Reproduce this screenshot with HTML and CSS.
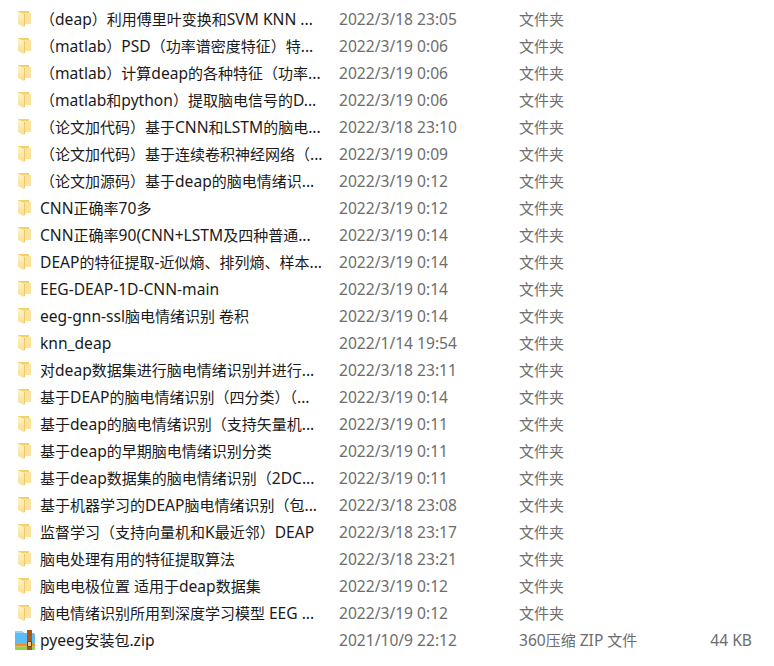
FILE: index.html
```html
<!DOCTYPE html>
<html lang="zh-CN">

<head>
    <meta charset="UTF-8">
    <title>文件列表</title>
    <link rel="stylesheet" href="styles.css">
</head>

<body>
    <svg class="defs" width="0" height="0">
        <defs>
            <linearGradient id="door" x1="0" y1="0" x2="0" y2="1">
                <stop offset="0" stop-color="#fef3cb"/>
                <stop offset="1" stop-color="#f9dd8e"/>
            </linearGradient>
        </defs>
        <symbol id="folder" viewBox="0 0 13 16">
            <path d="M0 0h11v13H0z" fill="#f3d06a"/>
            <path d="M5 2h8v11H6l-1 1z" fill="#fae39a"/>
            <path d="M0 .5l6 2.500V16L0 13z" fill="url(#door)"/>
            <path d="M6 3v13l1-1.500V3z" fill="#eec766"/>
        </symbol>
        <symbol id="zip" viewBox="0 0 20 20">
            <path d="M0 3q0-2 2-2h5l2 2h9q2 0 2 2v10H0z" fill="#5cbcf6"/>
            <path d="M0 1.500q0-.5 2-.5h5l2 2H1z" fill="#8ed4fa"/>
            <path d="M0 14h20v2.500H0z" fill="#f48f1e"/>
            <path d="M0 16.500h20V19q0 1-1 1H1q-1 0-1-1z" fill="#92d050"/>
            <path d="M12 0h5v20h-5z" fill="#a8591a"/>
            <path d="M12.500 11.500h4v5h-4z" fill="#f5c878" stroke="#7c3f10"/>
        </symbol>
    </svg>

    <ul class="file-list">
        <li class="row"><svg class="icon"><use href="#folder"/></svg><span class="name">（<span class="en">deap</span>）利用傅里叶变换和<span class="en">SVM KNN ...</span></span><span class="date">2022/3/18 23:05</span><span class="type">文件夹</span></li>
        <li class="row"><svg class="icon"><use href="#folder"/></svg><span class="name">（<span class="en">matlab</span>）<span class="en">PSD</span>（功率谱密度特征）特<span class="en">...</span></span><span class="date">2022/3/19 0:06</span><span class="type">文件夹</span></li>
        <li class="row"><svg class="icon"><use href="#folder"/></svg><span class="name">（<span class="en">matlab</span>）计算<span class="en">deap</span>的各种特征（功率<span class="en">...</span></span><span class="date">2022/3/19 0:06</span><span class="type">文件夹</span></li>
        <li class="row"><svg class="icon"><use href="#folder"/></svg><span class="name">（<span class="en">matlab</span>和<span class="en">python</span>）提取脑电信号的<span class="en">D...</span></span><span class="date">2022/3/19 0:06</span><span class="type">文件夹</span></li>
        <li class="row"><svg class="icon"><use href="#folder"/></svg><span class="name">（论文加代码）基于<span class="en">CNN</span>和<span class="en">LSTM</span>的脑电<span class="en">...</span></span><span class="date">2022/3/18 23:10</span><span class="type">文件夹</span></li>
        <li class="row"><svg class="icon"><use href="#folder"/></svg><span class="name">（论文加代码）基于连续卷积神经网络（<span class="en">...</span></span><span class="date">2022/3/19 0:09</span><span class="type">文件夹</span></li>
        <li class="row"><svg class="icon"><use href="#folder"/></svg><span class="name">（论文加源码）基于<span class="en">deap</span>的脑电情绪识<span class="en">...</span></span><span class="date">2022/3/19 0:12</span><span class="type">文件夹</span></li>
        <li class="row"><svg class="icon"><use href="#folder"/></svg><span class="name"><span class="en">CNN</span>正确率<span class="en">70</span>多</span><span class="date">2022/3/19 0:12</span><span class="type">文件夹</span></li>
        <li class="row"><svg class="icon"><use href="#folder"/></svg><span class="name"><span class="en">CNN</span>正确率<span class="en">90(CNN+LSTM</span>及四种普通<span class="en">...</span></span><span class="date">2022/3/19 0:14</span><span class="type">文件夹</span></li>
        <li class="row"><svg class="icon"><use href="#folder"/></svg><span class="name"><span class="en">DEAP</span>的特征提取<span class="en">-</span>近似熵、排列熵、样本<span class="en">...</span></span><span class="date">2022/3/19 0:14</span><span class="type">文件夹</span></li>
        <li class="row"><svg class="icon"><use href="#folder"/></svg><span class="name"><span class="en">EEG-DEAP-1D-CNN-main</span></span><span class="date">2022/3/19 0:14</span><span class="type">文件夹</span></li>
        <li class="row"><svg class="icon"><use href="#folder"/></svg><span class="name"><span class="en">eeg-gnn-ssl</span>脑电情绪识别 卷积</span><span class="date">2022/3/19 0:14</span><span class="type">文件夹</span></li>
        <li class="row"><svg class="icon"><use href="#folder"/></svg><span class="name"><span class="en">knn_deap</span></span><span class="date">2022/1/14 19:54</span><span class="type">文件夹</span></li>
        <li class="row"><svg class="icon"><use href="#folder"/></svg><span class="name">对<span class="en">deap</span>数据集进行脑电情绪识别并进行<span class="en">...</span></span><span class="date">2022/3/18 23:11</span><span class="type">文件夹</span></li>
        <li class="row"><svg class="icon"><use href="#folder"/></svg><span class="name">基于<span class="en">DEAP</span>的脑电情绪识别（四分类）（<span class="en">...</span></span><span class="date">2022/3/19 0:14</span><span class="type">文件夹</span></li>
        <li class="row"><svg class="icon"><use href="#folder"/></svg><span class="name">基于<span class="en">deap</span>的脑电情绪识别（支持矢量机<span class="en">...</span></span><span class="date">2022/3/19 0:11</span><span class="type">文件夹</span></li>
        <li class="row"><svg class="icon"><use href="#folder"/></svg><span class="name">基于<span class="en">deap</span>的早期脑电情绪识别分类</span><span class="date">2022/3/19 0:11</span><span class="type">文件夹</span></li>
        <li class="row"><svg class="icon"><use href="#folder"/></svg><span class="name">基于<span class="en">deap</span>数据集的脑电情绪识别（<span class="en">2DC...</span></span><span class="date">2022/3/19 0:11</span><span class="type">文件夹</span></li>
        <li class="row"><svg class="icon"><use href="#folder"/></svg><span class="name">基于机器学习的<span class="en">DEAP</span>脑电情绪识别（包<span class="en">...</span></span><span class="date">2022/3/18 23:08</span><span class="type">文件夹</span></li>
        <li class="row"><svg class="icon"><use href="#folder"/></svg><span class="name">监督学习（支持向量机和<span class="en">K</span>最近邻）<span class="en">DEAP</span></span><span class="date">2022/3/18 23:17</span><span class="type">文件夹</span></li>
        <li class="row"><svg class="icon"><use href="#folder"/></svg><span class="name">脑电处理有用的特征提取算法</span><span class="date">2022/3/18 23:21</span><span class="type">文件夹</span></li>
        <li class="row"><svg class="icon"><use href="#folder"/></svg><span class="name">脑电电极位置 适用于<span class="en">deap</span>数据集</span><span class="date">2022/3/19 0:12</span><span class="type">文件夹</span></li>
        <li class="row"><svg class="icon"><use href="#folder"/></svg><span class="name">脑电情绪识别所用到深度学习模型 <span class="en">EEG ...</span></span><span class="date">2022/3/19 0:12</span><span class="type">文件夹</span></li>
        <li class="row"><svg class="icon icon-zip"><use href="#zip"/></svg><span class="name"><span class="en">pyeeg</span>安装包<span class="en">.zip</span></span><span class="date">2021/10/9 22:12</span><span class="type"><span class="en">360</span>压缩 <span class="en">ZIP</span> 文件</span><span class="size">44 KB</span></li>
    </ul>
</body>

</html>
```
FILE: styles.css
```css
body {
    margin: 0;
    background-color: white;
    font-family: "Noto Sans", "Noto Sans CJK SC", sans-serif;
    font-size: 15px;
}

.defs {
    display: block;
    height: 0;
}

.file-list {
    list-style: none;
    margin: 0;
    padding: 5px 0 0 0;
}

.row {
    display: flex;
    align-items: center;
    height: 27px;
    line-height: 20px;
    white-space: nowrap;
    color: #6d6d6d;
}

.icon {
    width: 13px;
    height: 16px;
    margin-left: 18px;
    margin-right: 9px;
    flex-shrink: 0;
}

.icon-zip {
    width: 20px;
    height: 20px;
    margin-left: 15px;
    margin-right: 5px;
}

.en {
    font-size: 15.6px;
}

.name {
    width: 299px;
    flex-shrink: 0;
    color: #1a1a1a;
}

.date {
    width: 180px;
    flex-shrink: 0;
    font-size: 15.6px;
}

.type {
    width: 180px;
    flex-shrink: 0;
}

.size {
    width: 53px;
    text-align: right;
    font-size: 15.6px;
}
```
